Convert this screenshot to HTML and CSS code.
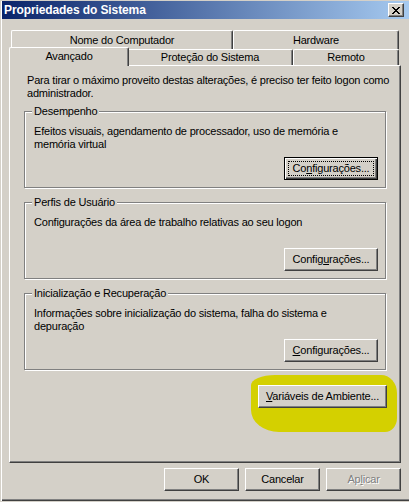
FILE: index.html
```html
<!DOCTYPE html>
<html lang="pt-BR">
<head>
<meta charset="utf-8">
<title>Propriedades do Sistema</title>
<link rel="stylesheet" href="styles.css">
</head>
<body>
<div class="window">
  <div class="titlebar">
    <span class="title">Propriedades do Sistema</span>
    <button class="close" aria-label="Fechar">
      <svg width="8" height="7" viewBox="0 0 8 7" shape-rendering="crispEdges"><path d="M0 0h2v1H0z M6 0h2v1H6z M1 1h2v1H1z M5 1h2v1H5z M2 2h4v1H2z M3 3h2v1H3z M2 4h4v1H2z M1 5h2v1H1z M5 5h2v1H5z M0 6h2v1H0z M6 6h2v1H6z" fill="#000"/></svg>
    </button>
  </div>
  <div class="content">
    <div class="tabs">
      <div class="tabrow row1">
        <div class="tab t-nome">Nome do Computador</div>
        <div class="tab t-hw">Hardware</div>
      </div>
      <div class="tabrow row2">
        <div class="tab sel t-av">Avançado</div>
        <div class="tab t-prot">Proteção do Sistema</div>
        <div class="tab t-rem">Remoto</div>
      </div>
    </div>
    <div class="panel">
      <p class="intro">Para tirar o máximo proveito destas alterações, é preciso ter feito logon como<br>administrador.</p>
      <section class="group">
        <div class="legend">Desempenho</div>
        <p class="desc">Efeitos visuais, agendamento de processador, uso de memória e<br>memória virtual</p>
        <button class="btn cfg default"><span class="focus">Co<u>n</u>figurações...</span></button>
      </section>
      <section class="group">
        <div class="legend">Perfis de Usuário</div>
        <p class="desc">Configurações da área de trabalho relativas ao seu logon</p>
        <button class="btn cfg">Config<u>u</u>rações...</button>
      </section>
      <section class="group">
        <div class="legend">Inicialização e Recuperação</div>
        <p class="desc">Informações sobre inicialização do sistema, falha do sistema e<br>depuração</p>
        <button class="btn cfg"><u>C</u>onfigurações...</button>
      </section>
      <div class="highlight">
        <button class="btn env"><u>V</u>ariáveis de Ambiente...</button>
      </div>
    </div>
    <div class="actions">
      <button class="btn act">OK</button>
      <button class="btn act">Cancelar</button>
      <button class="btn act disabled">Ap<u>l</u>icar</button>
    </div>
  </div>
</div>
</body>
</html>
```
FILE: styles.css
```css
html, body {
  margin: 0;
  padding: 0;
  background: #d4d0c8;
}

body {
  font-family: "Liberation Sans", Arial, sans-serif;
  font-size: 11px;
  line-height: 13px;
  letter-spacing: -0.2px;
  color: #000;
  overflow: hidden;
}

.window {
  width: 409px;
  height: 501px;
  box-sizing: border-box;
  padding: 1px 0 0 2px;
  background: #d4d0c8;
  box-shadow: inset 1px 1px #d4d0c8, inset 2px 2px #ffffff, inset 0 -1px #404040, inset 0 -2px #808080;
  display: flex;
  flex-direction: column;
}

/* Title bar */
.titlebar {
  height: 18px;
  display: flex;
  align-items: center;
  padding: 0 5px 0 2px;
  background: linear-gradient(to right, #0a246a, #a6caf0);
}

.title {
  color: #fff;
  font-weight: bold;
  font-size: 12px;
  letter-spacing: -0.1px;
}

.close {
  margin-left: auto;
  width: 16px;
  height: 14px;
  padding: 0;
  box-sizing: border-box;
  background: #d4d0c8;
  border: 1px solid;
  border-color: #ffffff #404040 #404040 #ffffff;
  box-shadow: inset -1px -1px #808080;
  display: flex;
  align-items: center;
  justify-content: center;
}

.close svg {
  display: block;
  margin: 0 0 0 -1px;
}

/* Content */
.content {
  padding: 11px 8px 0 7px;
  display: flex;
  flex-direction: column;
}

.tabs {
  padding: 0 2px;
}

.tabrow {
  display: flex;
  align-items: flex-start;
}

.tab {
  box-sizing: border-box;
  display: flex;
  align-items: center;
  justify-content: center;
  background: #d4d0c8;
  border-top: 1px solid #ffffff;
  border-left: 1px solid #ffffff;
  border-right: 1px solid #404040;
  box-shadow: inset -1px 0 #808080;
  border-radius: 2px 2px 0 0;
  white-space: nowrap;
}

.row1 .tab {
  height: 19px;
}

.row2 .tab {
  height: 16px;
}

.row2 .tab.sel {
  height: 19px;
  margin: -2px -2px -1px -2px;
  padding-bottom: 1px;
  position: relative;
  z-index: 1;
}

.t-nome { width: 222px; }
.t-hw { width: 166px; }
.t-av { width: 120px; }
.t-prot { width: 166px; }
.t-rem { width: 106px; }

.panel {
  height: 398px;
  box-sizing: border-box;
  border-top: 1px solid #ffffff;
  border-left: 1px solid #ffffff;
  border-right: 1px solid #404040;
  border-bottom: 1px solid #404040;
  box-shadow: inset -1px -1px #808080;
  padding: 8px 14px 0 14px;
  display: flex;
  flex-direction: column;
}

.intro {
  margin: 0 0 0 3px;
  white-space: nowrap;
}

/* Group boxes */
.group {
  height: 77px;
  box-sizing: border-box;
  margin-top: 11px;
  border: 1px solid #808080;
  box-shadow: inset 1px 1px #ffffff, 1px 1px #ffffff;
  padding: 0 7px 7px 9px;
  display: flex;
  flex-direction: column;
}

.group + .group {
  margin-top: 14px;
}

.legend {
  align-self: flex-start;
  margin: -7px 0 0 -2px;
  padding: 0 2px;
  background: #d4d0c8;
  white-space: nowrap;
}

.desc {
  margin: 7px 0 0 0;
  white-space: nowrap;
}

/* Buttons */
.btn {
  box-sizing: border-box;
  height: 23px;
  padding: 0;
  background: #d4d0c8;
  border: 1px solid;
  border-color: #ffffff #404040 #404040 #ffffff;
  box-shadow: inset -1px -1px #808080;
  font-family: inherit;
  font-size: 11px;
  line-height: 13px;
  letter-spacing: -0.2px;
  color: #000;
  white-space: nowrap;
}

.cfg {
  width: 94px;
  margin-top: auto;
  align-self: flex-end;
}

.btn.default {
  border-color: #000;
  box-shadow: inset 1px 1px #ffffff, inset -1px -1px #404040, inset -2px -2px #808080;
  padding: 3px;
}

.focus {
  display: flex;
  align-items: center;
  justify-content: center;
  height: 100%;
  box-sizing: border-box;
  border: 1px dotted #000;
}

.highlight {
  align-self: flex-end;
  margin: 5px -11px 0 0;
  padding: 10px 10px 24px 7px;
  background: #d4d000;
  border-radius: 24px 16px 12px 28px / 10px 18px 14px 22px;
}

.env {
  display: block;
  width: 129px;
}

.actions {
  display: flex;
  justify-content: flex-end;
  gap: 6px;
  margin-top: 5px;
}

.act {
  width: 75px;
}

.btn.disabled {
  color: #808080;
  text-shadow: 1px 1px #ffffff;
}
```
